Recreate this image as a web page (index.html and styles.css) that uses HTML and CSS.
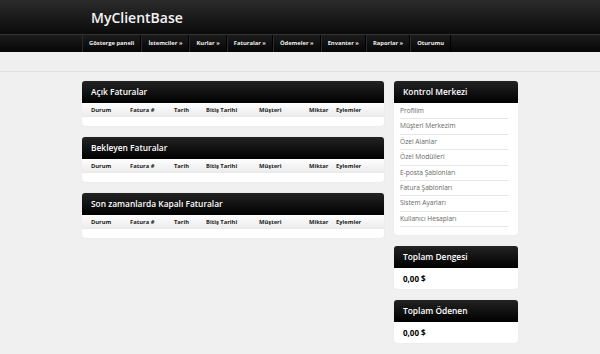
FILE: index.html
```html
<!DOCTYPE html>
<html lang="tr">
<head>
    <meta charset="UTF-8">
    <title>MyClientBase</title>
    <link rel="stylesheet" href="styles.css">
</head>
<body>
    <header class="top">
        <h1 class="logo">MyClientBase</h1>
    </header>
    <nav class="nav">
        <ul>
            <li>Gösterge paneli</li>
            <li>İstemciler »</li>
            <li>Kurlar »</li>
            <li>Faturalar »</li>
            <li>Ödemeler »</li>
            <li>Envanter »</li>
            <li>Raporlar »</li>
            <li>Oturumu</li>
        </ul>
    </nav>
    <div class="subbar"></div>

    <div class="content">
        <div class="main-col">
            <div class="box">
                <div class="box-head">Açık Faturalar</div>
                <table class="grid">
                    <thead>
                        <tr>
                            <th class="c1">Durum</th>
                            <th class="c2">Fatura #</th>
                            <th class="c3">Tarih</th>
                            <th class="c4">Bitiş Tarihi</th>
                            <th class="c5">Müşteri</th>
                            <th class="c6">Miktar</th>
                            <th>Eylemler</th>
                        </tr>
                    </thead>
                </table>
                <div class="box-empty"></div>
            </div>

            <div class="box">
                <div class="box-head">Bekleyen Faturalar</div>
                <table class="grid">
                    <thead>
                        <tr>
                            <th class="c1">Durum</th>
                            <th class="c2">Fatura #</th>
                            <th class="c3">Tarih</th>
                            <th class="c4">Bitiş Tarihi</th>
                            <th class="c5">Müşteri</th>
                            <th class="c6">Miktar</th>
                            <th>Eylemler</th>
                        </tr>
                    </thead>
                </table>
                <div class="box-empty"></div>
            </div>

            <div class="box">
                <div class="box-head">Son zamanlarda Kapalı Faturalar</div>
                <table class="grid">
                    <thead>
                        <tr>
                            <th class="c1">Durum</th>
                            <th class="c2">Fatura #</th>
                            <th class="c3">Tarih</th>
                            <th class="c4">Bitiş Tarihi</th>
                            <th class="c5">Müşteri</th>
                            <th class="c6">Miktar</th>
                            <th>Eylemler</th>
                        </tr>
                    </thead>
                </table>
                <div class="box-empty"></div>
            </div>
        </div>

        <div class="side-col">
            <div class="box">
                <div class="box-head">Kontrol Merkezi</div>
                <ul class="side-links">
                    <li>Profilim</li>
                    <li>Müşteri Merkezim</li>
                    <li>Özel Alanlar</li>
                    <li>Özel Modülleri</li>
                    <li>E-posta Şablonları</li>
                    <li>Fatura Şablonları</li>
                    <li>Sistem Ayarları</li>
                    <li>Kullanıcı Hesapları</li>
                </ul>
            </div>

            <div class="box">
                <div class="box-head">Toplam Dengesi</div>
                <div class="box-total">0,00 $</div>
            </div>

            <div class="box">
                <div class="box-head">Toplam Ödenen</div>
                <div class="box-total">0,00 $</div>
            </div>
        </div>
    </div>
</body>
</html>
```

FILE: styles.css
```css
body {
    margin: 0;
    background-color: #f0f0f0;
    font-family: 'Open Sans', 'DejaVu Sans', sans-serif;
    color: #222;
}

.top {
    height: 34px;
    background: linear-gradient(#2b2b2b, #0b0b0b);
    border-bottom: 1px solid #333;
}

.logo {
    margin: 0;
    padding: 8px 0 0 91px;
    font-size: 14px;
    font-weight: 600;
    line-height: 19px;
    color: #f4f4f4;
}

.nav {
    height: 17px;
    background: linear-gradient(#1c1c1c, #050505);
}

.nav ul {
    margin: 0;
    padding: 0 0 0 82px;
    list-style: none;
    display: flex;
}

.nav li {
    padding: 0 6px 0 6px;
    font-size: 5.8px;
    font-weight: 700;
    line-height: 17px;
    color: #eee;
    border-left: 1px solid #2a2a2a;
    border-right: 1px solid #000;
}

.subbar {
    height: 19px;
    background-color: #efefef;
    border-bottom: 1px solid #e2e2e2;
}

.content {
    display: flex;
    gap: 10px;
    padding: 9px 0 0 82px;
}

.main-col {
    width: 302px;
}

.side-col {
    width: 124px;
}

.box {
    background-color: #fff;
    border-radius: 3px;
    box-shadow: 0 0 1px rgba(0,0,0,0.15);
    margin-bottom: 11px;
}

.box-head {
    height: 22px;
    padding-left: 9px;
    background: linear-gradient(#232323, #000);
    border-radius: 3px 3px 0 0;
    color: #fff;
    font-size: 8.4px;
    font-weight: 600;
    line-height: 22px;
}

.grid {
    width: 100%;
    border-collapse: collapse;
    table-layout: fixed;
}

.grid th {
    height: 14px;
    padding: 0;
    text-align: left;
    font-size: 5.8px;
    font-weight: 700;
    color: #1a1a1a;
    background: linear-gradient(#fff, #eaeaea);
}

.grid .c1 { width: 39px; padding-left: 9px; }
.grid .c2 { width: 44px; }
.grid .c3 { width: 32px; }
.grid .c4 { width: 53px; }
.grid .c5 { width: 50px; }
.grid .c6 { width: 27px; }

.box-empty {
    height: 9px;
}

.side-links {
    margin: 0;
    padding: 1px 10px 8px 6px;
    list-style: none;
}

.side-links li {
    height: 14.4px;
    line-height: 14px;
    font-size: 6.6px;
    color: #666;
    border-bottom: 1px solid #e6e6e6;
}

.box-total {
    height: 21px;
    padding-left: 9px;
    line-height: 21px;
    font-size: 8px;
    font-weight: 700;
    color: #000;
}
```
